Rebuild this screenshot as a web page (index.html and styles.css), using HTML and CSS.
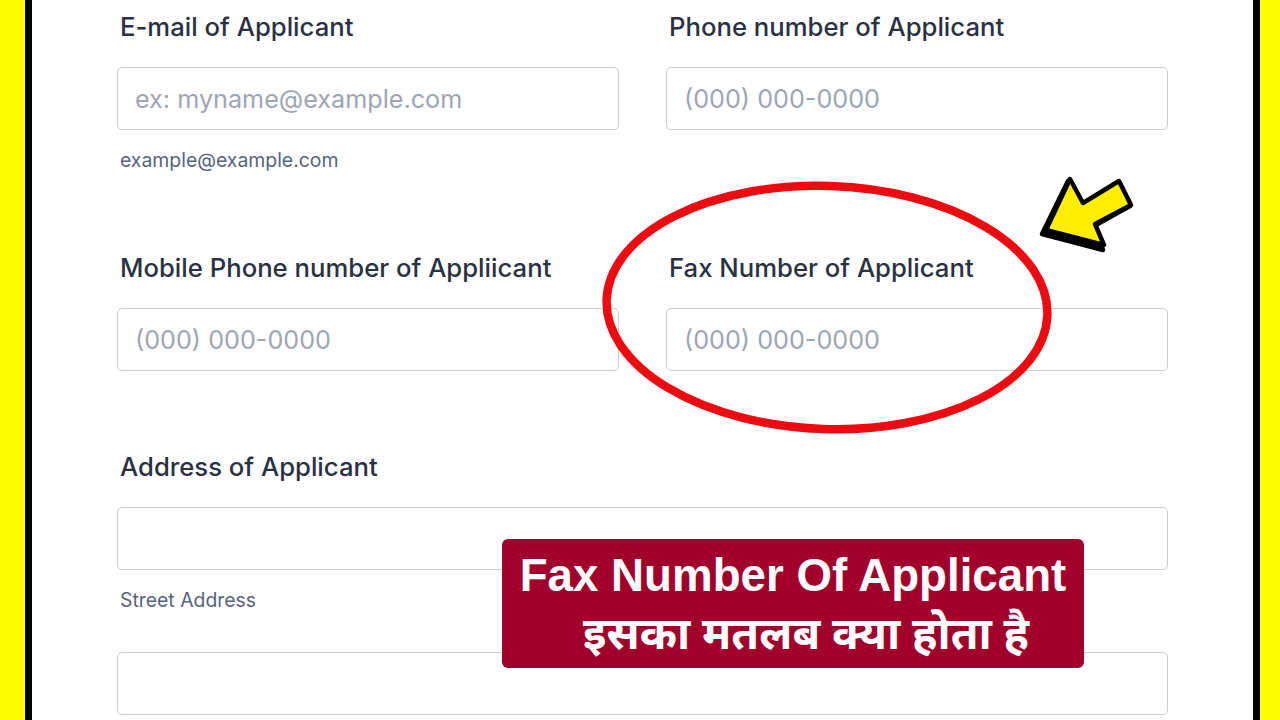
FILE: index.html
```html
<!DOCTYPE html>
<html lang="en">
<head>
<meta charset="utf-8">
<title>Fax Number Of Applicant</title>
<link rel="stylesheet" href="styles.css">
</head>
<body>
<div class="frame">
  <div class="sheet">
    <form class="form">
      <div class="row two">
        <div class="field">
          <label class="label">E-mail of Applicant</label>
          <div class="input"><span class="ph">ex: myname@example.com</span></div>
          <div class="sub">example@example.com</div>
        </div>
        <div class="field">
          <label class="label">Phone number of Applicant</label>
          <div class="input"><span class="ph">(000) 000-0000</span></div>
        </div>
      </div>
      <div class="row two row2">
        <div class="field">
          <label class="label">Mobile Phone number of Appliicant</label>
          <div class="input"><span class="ph">(000) 000-0000</span></div>
        </div>
        <div class="field">
          <label class="label">Fax Number of Applicant</label>
          <div class="input"><span class="ph">(000) 000-0000</span></div>
        </div>
      </div>
      <div class="row row3">
        <div class="field">
          <label class="label">Address of Applicant</label>
          <div class="input"></div>
          <div class="sub sub-street">Street Address</div>
          <div class="input"></div>
        </div>
      </div>
    </form>
  </div>

  <svg class="overlay" viewBox="0 0 1280 720" width="1280" height="720" aria-hidden="true">
    <ellipse cx="827" cy="307.5" rx="220.5" ry="121.5" fill="none" stroke="#ec0b10" stroke-width="8.5" transform="rotate(2 827 307.5)"/>
    <polygon points="1042,234 1068,181 1081,205 1117,183 1130,206 1094,226 1103,250" fill="#000" stroke="#000" stroke-width="4.5" stroke-linejoin="round"/>
    <polygon points="1046,230 1070,179 1083,203 1119,181 1131,205 1095,224 1104,245" fill="#ffee00" stroke="#000" stroke-width="4.5" stroke-linejoin="round"/>
  </svg>

  <div class="banner">
    <div class="banner-en">Fax Number Of Applicant</div>
    <div class="banner-hi">इसका मतलब क्या होता है</div>
  </div>
</div>
</body>
</html>
```

FILE: styles.css
```css
html, body {
  margin: 0;
  padding: 0;
}

body {
  width: 1280px;
  height: 720px;
  overflow: hidden;
  font-family: Inter, "Noto Sans", "Liberation Sans", sans-serif;
}

.frame {
  position: relative;
  width: 1280px;
  height: 720px;
  background: #ffff00;
  display: flex;
}

.sheet {
  margin-left: 25px;
  width: 1235px;
  height: 720px;
  box-sizing: border-box;
  background: #ffffff;
  border-left: 7px solid #000;
  border-right: 7px solid #000;
  padding: 12px 0 0 85px;
  overflow: hidden;
}

.form {
  width: 1051px;
}

.row.two {
  display: grid;
  grid-template-columns: 502px 502px;
  column-gap: 47px;
}

.row2 {
  margin-top: 82px;
}

.row3 {
  margin-top: 81px;
}

.field {
  display: flex;
  flex-direction: column;
}

.label {
  display: block;
  font-size: 25.7px;
  line-height: 30px;
  font-weight: 500;
  color: #2a3142;
  margin-bottom: 25px;
  padding-left: 3px;
}

.input {
  height: 63px;
  box-sizing: border-box;
  border: 1.5px solid #c8cdd8;
  border-radius: 5px;
  background: #fff;
  display: flex;
  align-items: center;
  padding-left: 17px;
}

.ph {
  font-size: 25.2px;
  color: #9ea6b4;
  font-weight: 400;
}

.sub {
  margin-top: 19px;
  font-size: 19.4px;
  line-height: 22px;
  color: #57647e;
  padding-left: 3px;
}

.sub-street {
  margin-bottom: 41px;
}

.overlay {
  position: absolute;
  left: 0;
  top: 0;
  pointer-events: none;
}

.banner {
  position: absolute;
  left: 502px;
  top: 539px;
  width: 582px;
  height: 129px;
  box-sizing: border-box;
  background: #a0002b;
  border-radius: 6px;
  color: #fff;
  text-align: center;
  font-family: "Liberation Sans", Arial, sans-serif;
  font-weight: 700;
  padding-top: 12px;
}

.banner-en {
  font-size: 45.7px;
  line-height: 50px;
}

.banner-hi {
  font-family: "Noto Sans Devanagari", "Lohit Devanagari", "Noto Sans", "Liberation Sans", sans-serif;
  font-size: 45px;
  line-height: 60px;
  margin-top: 7px;
  padding-left: 26px;
}
```
